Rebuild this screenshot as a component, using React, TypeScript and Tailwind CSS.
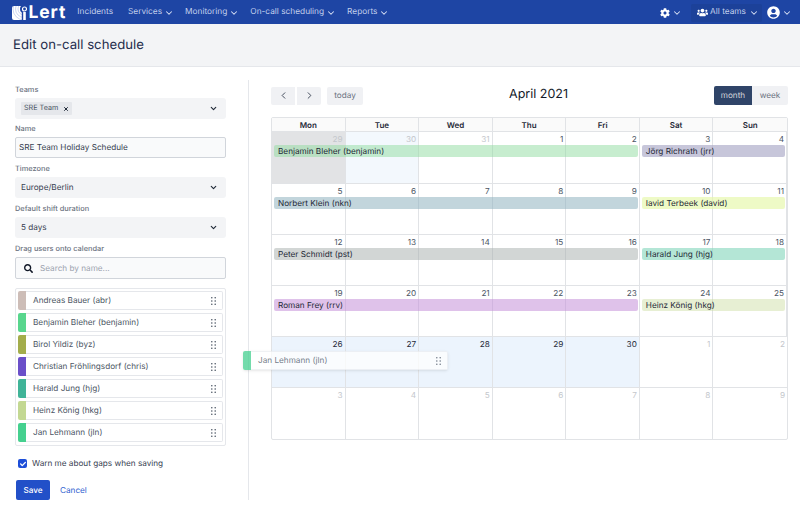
import { ChevronDown, ChevronLeft, ChevronRight, X } from "lucide-react";
import { FaCheck, FaCog, FaSearch, FaUserCircle, FaUsers } from "react-icons/fa";

const USERS = [
  { name: "Andreas Bauer (abr)", color: "bg-[#cdbdb7]" },
  { name: "Benjamin Bleher (benjamin)", color: "bg-[#58d68d]" },
  { name: "Birol Yildiz (byz)", color: "bg-[#a3ad4b]" },
  { name: "Christian Fröhlingsdorf (chris)", color: "bg-[#6a4fc9]" },
  { name: "Harald Jung (hjg)", color: "bg-[#40b498]" },
  { name: "Heinz König (hkg)", color: "bg-[#c3d892]" },
  { name: "Jan Lehmann (jln)", color: "bg-[#45d08f]" },
];

type Cell = { n: number; muted?: boolean; dark?: boolean; bg?: string };
type Ev = { label: string; cls: string; span: string; start: string };

const WEEKS: { h: string; cells: Cell[]; events: Ev[] }[] = [
  {
    h: "h-[52px]",
    cells: [
      { n: 29, muted: true, bg: "bg-[#e2e3e5]" },
      { n: 30, muted: true, bg: "bg-[#f3f8fd]" },
      { n: 31, muted: true },
      { n: 1 },
      { n: 2 },
      { n: 3 },
      { n: 4 },
    ],
    events: [
      { label: "Benjamin Bleher (benjamin)", cls: "bg-[#8fdc9f]/50", span: "col-span-5", start: "col-start-1" },
      { label: "Jörg Richrath (jrr)", cls: "bg-[#a9a8c6]/65", span: "col-span-2", start: "col-start-6" },
    ],
  },
  {
    h: "h-[51px]",
    cells: [{ n: 5 }, { n: 6 }, { n: 7 }, { n: 8 }, { n: 9 }, { n: 10 }, { n: 11 }],
    events: [
      { label: "Norbert Klein (nkn)", cls: "bg-[#8fb2bf]/55", span: "col-span-5", start: "col-start-1" },
      { label: "Iavid Terbeek (david)", cls: "bg-[#e5f7a8]/65", span: "col-span-2", start: "col-start-6" },
    ],
  },
  {
    h: "h-[51px]",
    cells: [{ n: 12 }, { n: 13 }, { n: 14 }, { n: 15 }, { n: 16 }, { n: 17 }, { n: 18 }],
    events: [
      { label: "Peter Schmidt (pst)", cls: "bg-[#a5aeab]/50", span: "col-span-5", start: "col-start-1" },
      { label: "Harald Jung (hjg)", cls: "bg-[#82d5bb]/60", span: "col-span-2", start: "col-start-6" },
    ],
  },
  {
    h: "h-[51px]",
    cells: [{ n: 19 }, { n: 20 }, { n: 21 }, { n: 22 }, { n: 23 }, { n: 24 }, { n: 25 }],
    events: [
      { label: "Roman Frey (rrv)", cls: "bg-[#c48fd8]/55", span: "col-span-5", start: "col-start-1" },
      { label: "Heinz König (hkg)", cls: "bg-[#c3d892]/40", span: "col-span-2", start: "col-start-6" },
    ],
  },
  {
    h: "h-[51px]",
    cells: [
      { n: 26, dark: true, bg: "bg-[#ecf4fd]" },
      { n: 27, dark: true, bg: "bg-[#ecf4fd]" },
      { n: 28, dark: true, bg: "bg-[#ecf4fd]" },
      { n: 29, dark: true, bg: "bg-[#ecf4fd]" },
      { n: 30, dark: true, bg: "bg-[#ecf4fd]" },
      { n: 1, muted: true },
      { n: 2, muted: true },
    ],
    events: [],
  },
  {
    h: "h-[51px]",
    cells: [3, 4, 5, 6, 7, 8, 9].map((n) => ({ n, muted: true })),
    events: [],
  },
];

const COL_STARTS = ["col-start-1", "col-start-2", "col-start-3", "col-start-4", "col-start-5", "col-start-6", "col-start-7"];

function Grip() {
  return (
    <svg width="5" height="8" viewBox="0 0 5 8" className="shrink-0 fill-[#4b5563]">
      {[0.8, 4, 7.2].map((y) => (
        <g key={y}>
          <circle cx="0.8" cy={y} r="0.8" />
          <circle cx="4.2" cy={y} r="0.8" />
        </g>
      ))}
    </svg>
  );
}

function Logo() {
  return (
    <div className="flex items-center">
      <svg width="16" height="14" viewBox="0 0 16 14">
        <rect x="0" y="0" width="13" height="14" rx="2" fill="#fff" />
        <g fill="none" stroke="#a9bbe6" strokeWidth="0.6">
          <circle cx="12" cy="3" r="6" />
          <circle cx="12" cy="3" r="8.5" />
          <circle cx="12" cy="3" r="11" />
        </g>
        <circle cx="12" cy="3" r="4" fill="#1e45a4" />
        <rect x="9.8" y="5" width="6.2" height="9" fill="#1e45a4" />
        <circle cx="12.5" cy="3" r="2" fill="none" stroke="#fff" strokeWidth="1.2" />
        <rect x="11.2" y="6" width="2.6" height="8" fill="#fff" />
      </svg>
      <span className="ml-[0.5px] text-[17.5px] font-bold leading-none tracking-[0.9px] text-white">Lert</span>
    </div>
  );
}

function NavCaret() {
  return <ChevronDown className="h-[10px] w-[10px] text-[#dbe3f5]" strokeWidth={2.5} />;
}

function NavItem({ label, caret = true }: { label: string; caret?: boolean }) {
  return (
    <div className={`flex items-center gap-[2px] text-[8.3px] text-[#c3d0ec] ${caret ? "" : "mr-[4px]"}`}>
      <span>{label}</span>
      {caret && <NavCaret />}
    </div>
  );
}

function Label({ children }: { children: string }) {
  return <div className="mb-[2px] text-[7.4px] font-medium leading-[12px] text-[#6b7280]">{children}</div>;
}

function Caret() {
  return <ChevronDown className="h-[9px] w-[9px] text-[#1f2937]" strokeWidth={3} />;
}

function SelectBox({ children }: { children: React.ReactNode }) {
  return (
    <div className="flex h-[21px] items-center justify-between rounded-[3px] bg-[#f3f4f6] pl-[6px] pr-[8px] text-[8.2px] text-[#374151]">
      {children}
      <Caret />
    </div>
  );
}

function UserRow({ name, color, ghost }: { name: string; color: string; ghost?: boolean }) {
  return (
    <div className="flex h-[19px] shrink-0 items-stretch">
      <div className={`w-[8px] rounded-l-[2px] ${color}`} />
      <div className={`flex flex-1 items-center justify-between rounded-r-[2px] border border-l-0 bg-white pl-[7px] pr-[6px] text-[8.2px] text-[#4b5563] ${ghost ? "border-[#eceef1]" : "border-[#e5e7eb]"}`}>
        <span>{name}</span>
        <Grip />
      </div>
    </div>
  );
}

function Sidebar() {
  return (
    <aside className="flex w-[249px] shrink-0 flex-col border-r border-[#e5e7eb] pl-[15px] pr-[22px]">
      <div className="mt-[4px]">
        <Label>Teams</Label>
        <div className="flex h-[21px] items-center justify-between rounded-[3px] bg-[#f3f4f6] pl-[6px] pr-[8px]">
          <div className="flex h-[13px] w-[51px] items-center gap-[5px] rounded-[1px] bg-[#e5e7eb] pl-[3px] text-[7.2px] text-[#4b5563]">
            SRE Team
            <X className="h-[6px] w-[6px] text-[#1f2937]" strokeWidth={4} />
          </div>
          <Caret />
        </div>
      </div>
      <div className="mt-[4px]">
        <Label>Name</Label>
        <div className="flex h-[21px] items-center rounded-[2px] border border-[#d1d5db] bg-[#f9fafb] px-[3px] text-[8.2px] text-[#374151]">
          SRE Team Holiday Schedule
        </div>
      </div>
      <div className="mt-[5px]">
        <Label>Timezone</Label>
        <SelectBox>Europe/Berlin</SelectBox>
      </div>
      <div className="mt-[5px]">
        <Label>Default shift duration</Label>
        <SelectBox>5 days</SelectBox>
      </div>
      <div className="mt-[5px]">
        <Label>Drag users onto calendar</Label>
        <div className="flex h-[22px] items-center gap-[7px] rounded-[2px] border border-[#d1d5db] bg-[#f9fafb] pl-[8px] text-[8.2px] text-[#9ca3af]">
          <FaSearch className="h-[9px] w-[9px] text-[#111827]" />
          Search by name...
        </div>
      </div>
      <div className="mt-[9px] h-[158px] shrink-0 overflow-hidden rounded-[2px] border border-[#e5e7eb] px-[2px] pt-[2px]">
        <div className="flex flex-col gap-[3px]">
          {USERS.map((u) => (
            <UserRow key={u.name} name={u.name} color={u.color} />
          ))}
          <UserRow name="" color="bg-[#9ca3af]" />
        </div>
      </div>
      <div className="mt-[13px] flex h-[9px] items-center gap-[5px] pl-[3px] text-[8.2px] text-[#374151]">
        <div className="flex h-[9px] w-[9px] items-center justify-center rounded-[2px] bg-[#1d4ed8]">
          <FaCheck className="h-[6px] w-[6px] text-white" />
        </div>
        Warn me about gaps when saving
      </div>
      <div className="mt-[12px] flex items-center gap-[10px] pl-[1px]">
        <div className="flex h-[20px] w-[34px] items-center justify-center rounded-[2px] bg-[#2250c8] text-[8.2px] font-medium text-white">Save</div>
        <div className="text-[8.2px] text-[#2f5fd0]">Cancel</div>
      </div>
    </aside>
  );
}

function Calendar() {
  return (
    <section className="flex-1 pl-[22px] pr-[12px] pt-[6px]">
      <div className="flex h-[19px] items-center justify-between">
        <div className="flex items-center">
          <div className="flex h-[18px] w-[24px] items-center justify-center rounded-l-[2px] bg-[#f0f1f4]">
            <ChevronLeft className="h-[11px] w-[11px] text-[#374151]" strokeWidth={2} />
          </div>
          <div className="ml-[2px] flex h-[18px] w-[24px] items-center justify-center rounded-r-[2px] bg-[#f0f1f4]">
            <ChevronRight className="h-[11px] w-[11px] text-[#374151]" strokeWidth={2} />
          </div>
          <div className="ml-[6px] flex h-[18px] w-[36px] items-center justify-center rounded-[2px] bg-[#f0f1f4] text-[8.2px] text-[#6b7280]">today</div>
        </div>
        <div className="text-[12.5px] text-[#111827]">April 2021</div>
        <div className="flex items-center">
          <div className="flex h-[19px] w-[38px] items-center justify-center rounded-l-[2px] bg-[#2f4468] text-[8.2px] text-[#d1d5db]">month</div>
          <div className="flex h-[19px] w-[36px] items-center justify-center rounded-r-[2px] bg-[#f0f1f4] text-[8.2px] text-[#6b7280]">week</div>
        </div>
      </div>

      <div className="mt-[12px] rounded-[2px] border border-[#e1e3e6]">
        <div className="grid h-[14px] grid-cols-7 border-b border-[#e1e3e6] bg-[#fafafa]">
          {["Mon", "Tue", "Wed", "Thu", "Fri", "Sat", "Sun"].map((d) => (
            <div key={d} className="flex items-center justify-center border-r border-[#e1e3e6] text-[8px] font-semibold text-[#1f2937] last:border-r-0">
              {d}
            </div>
          ))}
        </div>
        {WEEKS.map((w, i) => (
          <div key={i} className={`grid ${w.h} grid-cols-7 grid-rows-[13px_12px_1fr] border-b border-[#e1e3e6] last:border-b-0`}>
            {w.cells.map((c, j) => (
              <div
                key={j}
                className={`${COL_STARTS[j]} row-span-3 row-start-1 border-r border-[#e1e3e6] pr-[2px] pt-[1px] text-right text-[8.2px] leading-[12px] last:border-r-0 ${c.bg ?? ""} ${c.muted ? "text-[#c4c7cc]" : c.dark ? "text-[#1f2937]" : "text-[#4b5563]"}`}
              >
                {c.n}
              </div>
            ))}
            {w.events.map((e) => (
              <div
                key={e.label}
                className={`${e.start} ${e.span} row-start-2 mx-[2px] flex items-center rounded-[2px] pl-[4px] text-[8.2px] leading-[12px] text-[#1f2937] ${e.cls}`}
              >
                {e.label}
              </div>
            ))}
          </div>
        ))}
      </div>
    </section>
  );
}

export default function App() {
  return (
    <div className="relative h-[512px] w-[800px] overflow-hidden bg-white font-['Inter','Liberation_Sans',sans-serif] [text-rendering:geometricPrecision]">
      <nav className="flex h-[24px] items-center justify-between bg-[#1e45a4] pl-[12px] pr-[8px] pt-[1px]">
        <div className="flex items-center">
          <Logo />
          <div className="ml-[11px] flex items-center gap-[11px]">
            <NavItem label="Incidents" caret={false} />
            <NavItem label="Services" />
            <NavItem label="Monitoring" />
            <NavItem label="On-call scheduling" />
            <NavItem label="Reports" />
          </div>
        </div>
        <div className="flex items-center">
          <div className="flex items-center gap-[2px]">
            <FaCog className="h-[10px] w-[10px] text-white" />
            <NavCaret />
          </div>
          <div className="ml-[9px] flex h-[18px] items-center gap-[2px] rounded-[2px] bg-[#1c4199] pl-[6px] pr-[3px] text-[8.3px] text-[#c3d0ec]">
            <FaUsers className="h-[11px] w-[11px] text-white" />
            All teams
            <span className="ml-[1px]">
              <NavCaret />
            </span>
          </div>
          <div className="ml-[5px] flex items-center gap-[2px]">
            <FaUserCircle className="h-[13px] w-[13px] text-white" />
            <NavCaret />
          </div>
        </div>
      </nav>

      <header className="flex h-[43px] items-center border-b border-[#e5e7eb] bg-[#f3f4f6] pl-[13px] pt-[1px]">
        <h1 className="text-[13.2px] font-normal text-[#1f2d4d]">Edit on-call schedule</h1>
      </header>

      <main className="mt-[13px] flex h-[420px]">
        <Sidebar />
        <Calendar />
      </main>

      <div className="absolute left-[243px] top-[351px] w-[205px] rounded-[2px] opacity-75 shadow-sm">
        <UserRow name="Jan Lehmann (jln)" color="bg-[#45d08f]" ghost />
      </div>
    </div>
  );
}
